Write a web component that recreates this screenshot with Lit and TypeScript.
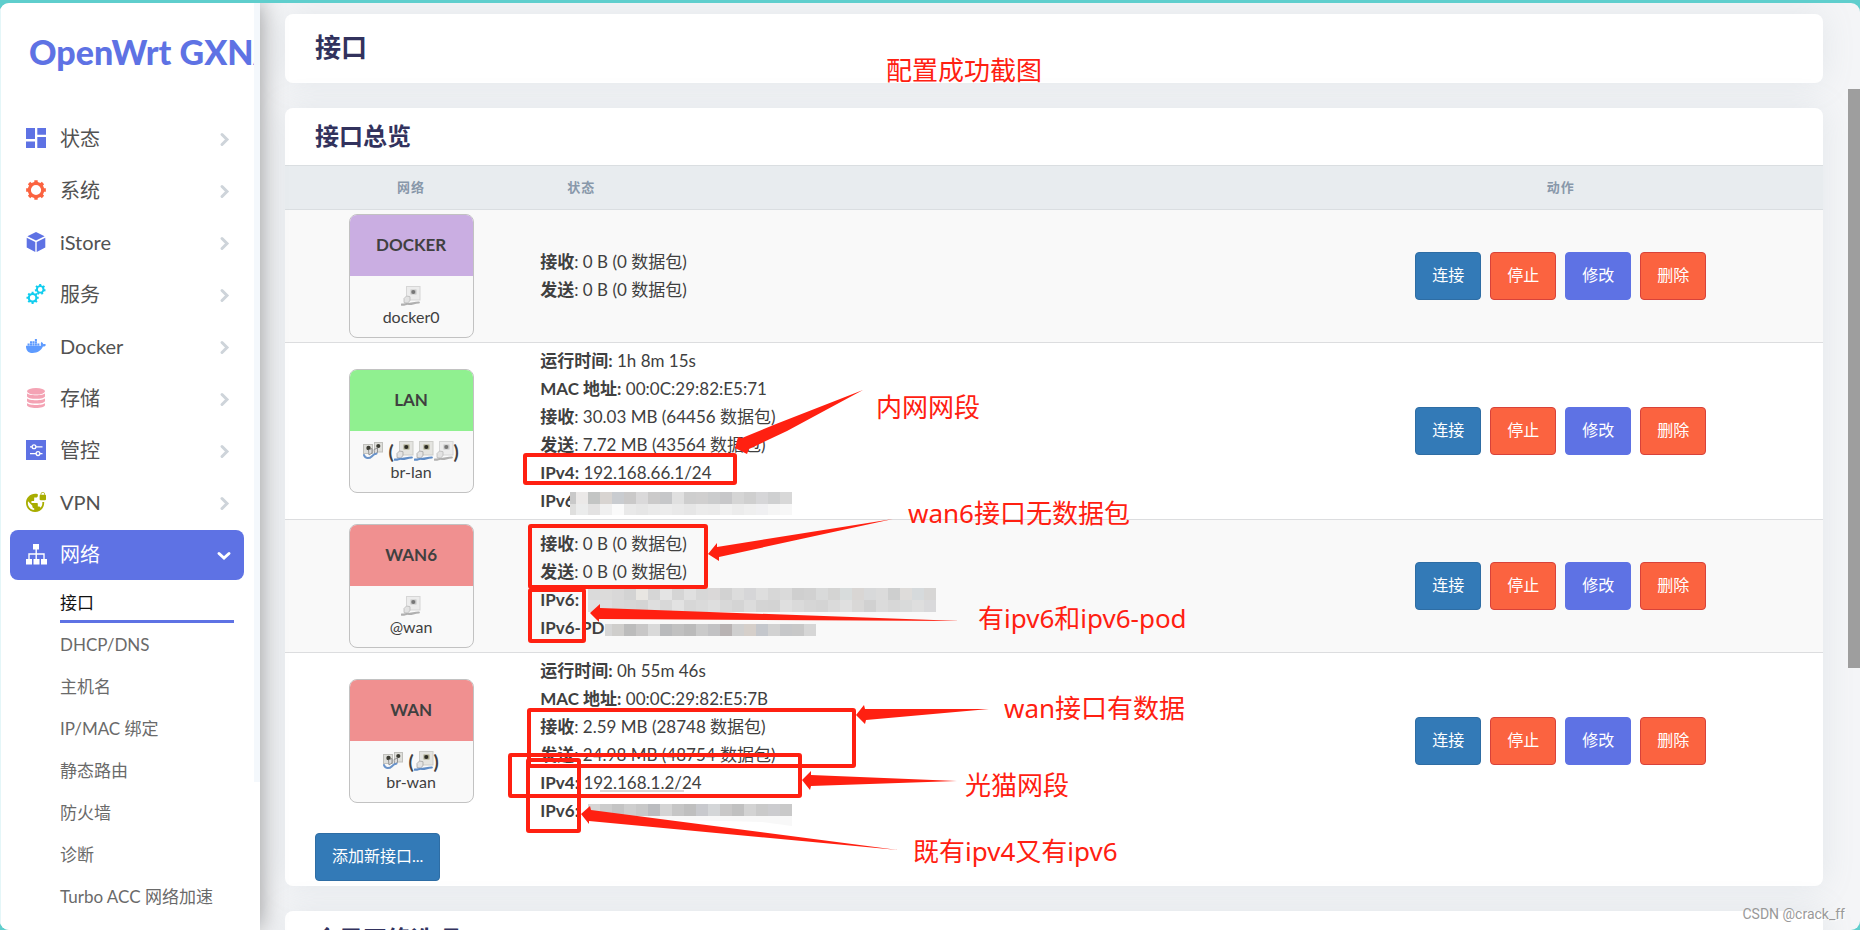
import { LitElement, html, css, svg, nothing } from "lit";
import { customElement, state } from "lit/decorators.js";
import { classMap } from "lit/directives/class-map.js";

/* Outline of a toothed wheel with a round hole, drawn with the even-odd rule. */
function gear(cx: number, cy: number, outer: number, inner: number, hole: number, teeth: number): string {
  const pts: string[] = [];
  const step = (Math.PI * 2) / teeth;
  const at = (r: number, a: number) => `${(cx + r * Math.sin(a)).toFixed(2)} ${(cy - r * Math.cos(a)).toFixed(2)}`;
  for (let i = 0; i < teeth; i++) {
    const a = i * step;
    pts.push(at(inner, a - step * 0.27), at(outer, a - step * 0.21), at(outer, a + step * 0.21), at(inner, a + step * 0.27));
  }
  return `M${pts.join("L")}ZM${cx - hole} ${cy}a${hole} ${hole} 0 1 0 ${hole * 2} 0a${hole} ${hole} 0 1 0 ${-hole * 2} 0Z`;
}

const icon = (viewBox: string, color: string, body: unknown) =>
  html`<svg class="nav-icon" viewBox=${viewBox} fill=${color} aria-hidden="true">${body}</svg>`;

const icons = {
  status: icon("0 0 20 20", "#5e72e4", svg`<path d="M0 0h9v11H0zM0 13.5h9V20H0zM11.3 0H20v6.7h-8.7zM11.3 9H20v11h-8.7z"/>`),
  system: icon("0 0 20 20", "#fb6340", svg`<path fill-rule="evenodd" d=${gear(10, 10, 10, 8.3, 5.1, 8)}/>`),
  store: icon("0 0 20 20", "#5e72e4", svg`<path d="M10 0l8.6 4.3L10 8.6 1.4 4.3zM.7 5.7L9.3 10v10L.7 15.6zM19.3 5.7L10.7 10v10l8.600-4.400z"/>`),
  services: icon("0 0 20 20", "#11cdef", svg`<path fill-rule="evenodd" d=${gear(14.2, 5.4, 5.5, 4.3, 2.3, 7)}/><path fill-rule="evenodd" d=${gear(6.6, 13.8, 6.2, 4.9, 2.7, 8)}/>`),
  docker: icon("0 0 640 512", "#5e9bff", svg`<path d="M349.9 236.3h-66.1v-59.4h66.1v59.4zm0-204.3h-66.1v60.7h66.1V32zm78.2 144.8H362v59.4h66.1v-59.4zm-156.3-72.1h-66.1v60.1h66.1v-60.1zm78.1 0h-66.1v60.1h66.1v-60.1zm276.8 100c-14.4-9.7-47.6-13.2-73.1-8.4-3.3-24-16.7-44.9-41.1-63.7l-14-9.3-9.3 14c-18.4 27.8-23.4 73.6-3.7 103.8-8.7 4.7-25.8 11.1-48.4 10.7H2.4c-8.7 50.8 5.8 116.8 44 162.1 37.1 43.9 92.7 66.2 165.4 66.2 157.4 0 273.9-72.5 328.4-204.2 21.4.4 67.6.1 91.3-45.2 1.5-2.5 6.6-13.2 8.5-17.1l-13.3-8.9zm-511.1-27.9h-66v59.4h66.1v-59.4zm78.1 0h-66.1v59.4h66.1v-59.4zm78.1 0h-66.1v59.4h66.1v-59.4zm-78.1-72.1h-66.1v60.1h66.1v-60.1z"/>`),
  storage: icon("0 0 20 20", "#f4a3b4", svg`<ellipse cx="10" cy="3.3" rx="9" ry="3.3"/><path d="M1 5.2c1.5 2.6 16.5 2.6 18 0v3c0 3.4-18 3.4-18 0zM1 10.200c1.5 2.6 16.5 2.6 18 0v2.700c0 3.400-18 3.400-18 0zM1 15c1.5 2.6 16.5 2.6 18 0v2c0 3.900-18 3.900-18 0z"/>`),
  control: icon("0 0 20 20", "#5e72e4", svg`<path d="M0 0h20v20H0z"/><g stroke="#fff" stroke-width="1.3" fill="#5e72e4"><path d="M4 6.8h12.5M4 13.6h12.5"/><circle cx="8" cy="6.8" r="1.9"/><circle cx="12" cy="13.6" r="1.9"/></g>`),
  vpn: icon("1 1 22 22", "#a8ad00", svg`<path d="M22 4v-.5C22 2.12 20.88 1 19.5 1S17 2.12 17 3.5V4c-.55 0-1 .45-1 1v4c0 .55.45 1 1 1h5c.55 0 1-.45 1-1V5c0-.55-.45-1-1-1zm-.8 0h-3.4v-.5c0-.94.76-1.7 1.7-1.7s1.7.76 1.7 1.7V4zm-2.28 8c.04.33.08.66.08 1 0 2.080-.8 3.970-2.1 5.390-.26-.81-1-1.390-1.900-1.390h-1v-3c0-.55-.45-1-1-1H7v-2h2c.55 0 1-.45 1-1V7h2c1.100 0 2-.9 2-2V3.460c-.95-.3-1.950-.46-3-.46C5.480 3 1 7.480 1 13s4.480 10 10 10 10-4.480 10-10c0-.34-.02-.67-.05-1h-2.030zM10 20.930c-3.950-.49-7-3.850-7-7.930 0-.62.08-1.210.21-1.790L8 16v1c0 1.100.9 2 2 2v1.930z"/>`),
  network: icon("0 0 20 20", "#fff", svg`<path d="M7 0h6v5.500H7zM0 15h6v5.500H0zM7.500 15h6v5.500h-6zM15 15h6v5.500h-6z"/><path d="M10.200 5v10M3 15v-5h15v5" fill="none" stroke="#fff" stroke-width="1.400"/>`),
};

const port = (up: boolean) => svg`
  <rect x="5.5" y=".5" width="13.5" height="13.5" fill=${up ? "#e4e4e0" : "#ececec"} stroke=${up ? "#cdcdc9" : "#d6d6d6"}/>
  <rect x="9.5" y="3.5" width="6" height="5" fill=${up ? "#a3a283" : "#c4c4c4"}/>
  <circle cx="12.300" cy="6" r="2" fill=${up ? "#2c2c26" : "#777"}/>
  <path d="M3 12.500l2.500-2.500 3.500.700v4l-2.500 2.300-3.500-.500z" fill="#e2e2e2" stroke=${up ? "#a3a3a3" : "#bababa"} stroke-width=".8"/>
  <path d="M.8 18.600c3 .600 4-1.300 7-.800s5-1.200 10-1.300" fill="none" stroke=${up ? "#5f8cc6" : "#b0b0b0"} stroke-width="2.200" stroke-linecap="round"/>`;

const bridge = svg`
  <rect x=".5" y="3.500" width="9" height="9" fill="#dededa" stroke="#c0c0bc"/>
  <rect x="11.500" y="1.500" width="8" height="9.500" fill="#dededa" stroke="#c0c0bc"/>
  <circle cx="5.500" cy="7" r="2.200" fill="#3c3c34"/><circle cx="15.300" cy="5" r="2.100" fill="#3c3c34"/>
  <path d="M5.500 9l3.500-1.500v4.500l-3 2zM11 8.500l3.500-1.500v4.500l-3 2z" fill="#ddd" stroke="#808080" stroke-width=".8"/>
  <path d="M1 14c1 3.500 5 4.200 8 1.200s3-1.500 4.500-2.700" fill="none" stroke="#6a93c9" stroke-width="2" stroke-linecap="round"/>`;

const thumb = (body: unknown, label: string) =>
  html`<svg class="thumb" viewBox="0 0 20 20" role="img" aria-label=${label}>${body}</svg>`;

interface NavItem { label: string; icon: unknown; }
interface Stat { key: string; value?: string; softColon?: boolean; }
interface Iface { name: string; device: string; tone: string; bridged: boolean; ports: boolean[]; stats: Stat[]; }

const NAV: NavItem[] = [
  { label: "状态", icon: icons.status },
  { label: "系统", icon: icons.system },
  { label: "iStore", icon: icons.store },
  { label: "服务", icon: icons.services },
  { label: "Docker", icon: icons.docker },
  { label: "存储", icon: icons.storage },
  { label: "管控", icon: icons.control },
  { label: "VPN", icon: icons.vpn },
  { label: "网络", icon: icons.network },
];

const SUBNAV = ["接口", "DHCP/DNS", "主机名", "IP/MAC 绑定", "静态路由", "防火墙", "诊断", "Turbo ACC 网络加速"];

const rx = (value: string): Stat => ({ key: "接收", value, softColon: true });
const tx = (value: string): Stat => ({ key: "发送", value, softColon: true });

const IFACES: Iface[] = [
  { name: "DOCKER", device: "docker0", tone: "docker", bridged: false, ports: [false],
    stats: [rx("0 B (0 数据包)"), tx("0 B (0 数据包)")] },
  { name: "LAN", device: "br-lan", tone: "lan", bridged: true, ports: [true, true, false],
    stats: [{ key: "运行时间", value: "1h 8m 15s" }, { key: "MAC 地址", value: "00:0C:29:82:E5:71" },
      rx("30.03 MB (64456 数据包)"), tx("7.72 MB (43564 数据包)"), { key: "IPv4", value: "192.168.66.1/24" }, { key: "IPv6" }] },
  { name: "WAN6", device: "@wan", tone: "wan", bridged: false, ports: [false],
    stats: [rx("0 B (0 数据包)"), tx("0 B (0 数据包)"), { key: "IPv6" }, { key: "IPv6-PD" }] },
  { name: "WAN", device: "br-wan", tone: "wan", bridged: true, ports: [true],
    stats: [{ key: "运行时间", value: "0h 55m 46s" }, { key: "MAC 地址", value: "00:0C:29:82:E5:7B" },
      rx("2.59 MB (28748 数据包)"), tx("24.98 MB (48754 数据包)"), { key: "IPv4", value: "192.168.1.2/24" }, { key: "IPv6" }] },
];

/* Hand-drawn notes laid over the page. */
const NOTES = [
  { text: "配置成功截图", x: 886, y: 53 },
  { text: "内网网段", x: 876, y: 390 },
  { text: "wan6接口无数据包", x: 908, y: 496 },
  { text: "有ipv6和ipv6-pod", x: 978, y: 601 },
  { text: "wan接口有数据", x: 1004, y: 691 },
  { text: "光猫网段", x: 965, y: 768 },
  { text: "既有ipv4又有ipv6", x: 913, y: 834 },
];

const FRAMES = [
  [523, 453, 737, 485], [528, 524, 708, 589], [528, 588, 586, 643],
  [527, 708, 856, 768], [508, 753, 802, 798], [526, 758, 581, 833],
];

const ARROWS = [
  "735,448 738,437 742,438 776,424 863,390 787,431 749,449 747,454",
  "708,554 717,543 717,547 893,519 719,557 719,561",
  "590,613 600,604 600,608 961,621 599,619 599,622",
  "856,715 864,705 865,709 989,709 866,720 865,724",
  "802,780 811,771 811,775 957,781 811,786 810,790",
  "581,814 590,806 591,810 898,850 589,821 589,824",
];

/* Pixelated strips that hide the addresses: x, y, first cell's width, cell height, cell colours. */
const MOSAICS: [number, number, number, number, string][] = [
  [570, 492, 6, 12, "c9c9c9 ebe9e8 c3c5c4 d8d4d1 c9ccd0 cac9c9 dad9da cbcaca c6c7c9 e0e0e0 cecece d0cfcf cbcccd c7c7c9 d5d5d5 cfcfcf d6d6d8 cfd0d1 d8d8d8"],
  [570, 504, 6, 11, "dfdfde ebecec e3e2e2 f0f0f0 fafafa e9e9e9 e6e6e6 eaeaea ececec e9e9e9 e6e6e6 ebebeb eaeaea f0f0f0 ececec efefef f0f0f2 f5f5f5 f7f7f7"],
  [588, 588, 12, 12, "dadada dcdbda d9d8d8 d3d3d3 e8e6e2 d6d6d6 e4e4e4 d5d5d5 e0e0e0 d7d7d7 dad8d8 d2d2d2 dcdcdc d6d6d8 dedede d7d7d7 dadada cfcfcf d1d1d1 d9dada d4d4d3 d8dcdc d9d6d4 d8d9da dbdbdb cecfcf dedcda d6dadc d7d6d5"],
  [588, 600, 12, 12, "e0e0e0 dddddf d8d8d8 d6d6d6 d4d4d4 dedede d8d8d8 e2e2e2 d7d7d7 dadada dedede d8d8d8 d4d4d4 dcdcdc d4d4d4 d3d3d3 dfdfdf dadada d6d6d6 d4d4d4 dadada e0e0e0 d9d8d7 d1d1d1 dbdbdb d7d7d7 d9dada dedede d9d9db"],
  [605, 624, 7, 12, "d6d6d6 cfcecc bcbcbc c8c7c7 d9d9d9 b9babc c1c1c1 bbbbbb cacaca c2c2c4 b8b3b3 cfcfcf d5cfca c4c7cc d2d2d2 c6c7c9 c8c8c8 d6d6d6"],
  [588, 804, 12, 12, "d5d5d5 cccccc c4c4c4 cecece c8c8c8 bbbcbf d4d4d4 c6c6c6 bfbfbf c8c9cd d4d6d8 c9c8c8 c1c1c1 d3d3d3 cacaca cccccf c9c9c9"],
];

@customElement("app-root")
export class AppRoot extends LitElement {
  @state() private current = "接口";

  static styles = css`
    :host {
      display: block;
      height: 100vh;
      overflow: hidden;
      position: relative;
      box-sizing: border-box;
      padding-top: 3px;
      background: #5fcecd;
      color: #404040;
      font: 17px/28px Lato, "Noto Sans CJK SC", sans-serif;
    }
    * { box-sizing: border-box; }
    h1, h2, ul { margin: 0; padding: 0; }
    ul { list-style: none; }
    a { color: inherit; text-decoration: none; }
    .frame {
      display: flex;
      height: 100%;
      border-radius: 9px;
      overflow: hidden;
      background: #f4f5f7;
      position: relative;
    }
    .sidebar {
      flex: none;
      width: 260px;
      display: flex;
      background: #fff;
      border-left: 1px solid #e4f6f8;
      box-shadow: 0 0 24px rgba(0, 0, 0, 0.4);
      z-index: 1;
    }
    .side-content { flex: 1; min-width: 0; overflow: hidden; }
    .side-track { width: 6px; height: 84%; background: #f4f8fc; }
    .brand {
      display: block;
      height: 111px;
      padding: 24px 0 0 28px;
      color: #5e72e4;
      font-size: 34px;
      font-weight: 900;
      line-height: 50px;
      white-space: nowrap;
    }
    .menu { display: flex; flex-direction: column; gap: 2px; padding: 0 10px 0 9px; }
    .menu-link {
      display: flex;
      align-items: center;
      height: 50px;
      padding: 0 13px 2px 16px;
      border-radius: 8px;
      color: #525252;
      font-size: 20px;
    }
    .nav-icon { width: 20px; height: 20px; margin-right: 14px; overflow: visible; }
    .menu-text { flex: 1; }
    .chevron { width: 14px; height: 14px; margin-top: 2px; fill: none; stroke: #ced4da; stroke-width: 3; stroke-linecap: round; overflow: visible; }
    .menu-link.active { background: #5e72e4; color: #fff; }
    .menu-link.active .chevron { stroke: #fff; }
    .submenu { padding: 0 10px 0 50px; margin-top: -1px; }
    .sub-link {
      display: block;
      height: 42px;
      padding-top: 1px;
      line-height: 42px;
      color: #6a6a6a;
      white-space: nowrap;
    }
    .sub-link.active { border-bottom: 3px solid #5e72e4; color: #111; }
    main {
      flex: 1;
      min-width: 0;
      display: flex;
      flex-direction: column;
      gap: 25px;
      padding: 11px 37px 0 25px;
    }
    .card {
      flex: none;
      background: #fff;
      border-radius: 8px;
      box-shadow: 0 0 32px rgba(136, 152, 170, 0.15);
    }
    .page-title { padding: 0 30px 2px; font-size: 26px; line-height: 67px; color: #32325d; }
    .card-title { padding: 0 30px 2px; font-size: 24px; line-height: 55px; color: #32325d; }
    table { width: 100%; table-layout: fixed; border-collapse: separate; border-spacing: 0; }
    .col-net { width: 16.4%; }
    .col-act { width: 34.1%; }
    th {
      height: 45px;
      padding: 0 0 2px;
      background: #e8ecef;
      border-top: 1px solid #dadee1;
      border-bottom: 1px solid #dadee1;
      color: #8898aa;
      font-size: 13px;
      letter-spacing: 1px;
    }
    .th-status { text-align: left; padding-left: 30px; }
    td { padding: 4px 0; border-bottom: 1px solid #dcdddf; vertical-align: middle; }
    tr:nth-child(odd) td { background: #f9f9f9; }
    tr:last-child td { border-bottom: 0; }
    .td-status { padding-left: 3px; }
    .ifacebox {
      width: 125px;
      margin: 0 auto;
      border: 1px solid #c2c2c2;
      border-radius: 8px;
      overflow: hidden;
      background: #f9f9f9;
      text-align: center;
    }
    .iface-head { padding-bottom: 2px; line-height: 59px; font-weight: 700; }
    .docker { background: #caaee2; }
    .lan { background: #90f090; }
    .wan { background: #f09090; }
    .iface-body { padding: 10px 0; font-size: 16px; line-height: 21px; }
    .thumbs { display: flex; justify-content: center; align-items: center; height: 20px; font-size: 19px; font-weight: 700; }
    .thumb { width: 20px; height: 20px; }
    .group { display: flex; align-items: center; margin-left: 5px; }
    .actions { display: flex; justify-content: center; gap: 9px; }
    button {
      height: 48px;
      padding: 0 16px 2px;
      border: 1px solid #2e6da4;
      border-radius: 4px;
      background: #337ab7;
      color: #fff;
      font: 16px/24px Lato, "Noto Sans CJK SC", sans-serif;
      cursor: pointer;
    }
    .danger { background: #fb6340; border-color: #d8423a; }
    .edit { background: #5e72e4; border-color: #5e72e4; }
    .card-foot { padding: 4px 30px 5px; display: flex; }
    .page-scroll {
      position: absolute;
      top: 86px;
      right: 0;
      width: 12px;
      height: 579px;
      background: #9e9e9e;
    }
    .overlay { position: absolute; inset: 0; z-index: 2; pointer-events: none; }
    .ink { position: absolute; left: 0; top: 0; width: 1860px; height: 930px; }
    .note {
      position: absolute;
      color: #ff2011;
      font: 26px/34px "Noto Sans", "Noto Sans CJK SC", sans-serif;
      white-space: nowrap;
    }
    .watermark {
      position: absolute;
      right: 15px;
      bottom: 4px;
      color: #999;
      font: 14px/24px Roboto, sans-serif;
      text-shadow: 1px 1px 0 #fff;
    }
  `;

  private renderNav(item: NavItem, active: boolean) {
    return html`<li>
      <a class=${classMap({ "menu-link": true, active })} href="#">
        ${item.icon}<span class="menu-text">${item.label}</span>
        <svg class="chevron" viewBox="0 0 14 14" aria-hidden="true">
          <path d=${active ? "M2 5.5L7 10l5-4.500" : "M5 2.500L10 7.500l-5 5"}></path>
        </svg>
      </a>
    </li>`;
  }

  private renderIface(i: Iface) {
    const ports = i.ports.map((up) => thumb(port(up), up ? "已连接" : "未连接"));
    return html`<tr>
      <td>
        <div class="ifacebox">
          <div class="iface-head ${i.tone}">${i.name}</div>
          <div class="iface-body">
            <div class="thumbs">
              ${i.bridged ? html`${thumb(bridge, "桥接")}<span class="group">(${ports})</span>` : ports}
            </div>
            ${i.device}
          </div>
        </div>
      </td>
      <td class="td-status">
        ${i.stats.map((s) => html`<div>
          ${s.softColon ? html`<strong>${s.key}</strong>:` : html`<strong>${s.key}:</strong>`}
          ${s.value ?? nothing}
        </div>`)}
      </td>
      <td>
        <div class="actions">
          <button type="button">连接</button>
          <button type="button" class="danger">停止</button>
          <button type="button" class="edit">修改</button>
          <button type="button" class="danger">删除</button>
        </div>
      </td>
    </tr>`;
  }

  private renderInk() {
    return html`<svg class="ink" viewBox="0 0 1860 930" aria-hidden="true">
      ${MOSAICS.map(([x, y, first, h, cells]) => cells.split(" ").map((c, n) =>
        svg`<rect x=${n === 0 ? x : x + first + (n - 1) * 12} y=${y} width=${n === 0 ? first : 12} height=${h}
          fill=${"#" + c} shape-rendering="crispEdges"/>`))}
      <path d="M600 790h84v2h-84z" fill="#d8d8d8"></path>
      <path d="M600 816h192v10l-30-4-162-4z" fill="#f8f8f8"></path>
      ${FRAMES.map(([l, t, r, b]) =>
        svg`<rect x=${l + 2} y=${t + 2} width=${r - l - 4} height=${b - t - 4} rx="1" fill="none" stroke="#ff2011" stroke-width="4"/>`)}
      ${ARROWS.map((p) => svg`<polygon points=${p} fill="#ff2011"/>`)}
    </svg>`;
  }

  render() {
    return html`
      <div class="frame">
        <aside class="sidebar">
          <nav class="side-content">
            <a class="brand" href="#">OpenWrt GXNAS</a>
            <ul class="menu">
              ${NAV.map((item, n) => this.renderNav(item, n === NAV.length - 1))}
              <li>
                <ul class="submenu">
                  ${SUBNAV.map((label) => html`<li>
                    <a class=${classMap({ "sub-link": true, active: label === this.current })} href="#"
                      @click=${() => (this.current = label)}>${label}</a>
                  </li>`)}
                </ul>
              </li>
            </ul>
          </nav>
          <div class="side-track"></div>
        </aside>
        <main>
          <header class="card"><h1 class="page-title">接口</h1></header>
          <section class="card">
            <h2 class="card-title">接口总览</h2>
            <table>
              <colgroup><col class="col-net" /><col /><col class="col-act" /></colgroup>
              <thead>
                <tr><th>网络</th><th class="th-status">状态</th><th>动作</th></tr>
              </thead>
              <tbody>${IFACES.map((i) => this.renderIface(i))}</tbody>
            </table>
            <div class="card-foot"><button type="button">添加新接口...</button></div>
          </section>
          <section class="card"><h2 class="card-title">全局网络选项</h2></section>
        </main>
        <div class="page-scroll"></div>
      </div>
      <div class="overlay">
        ${this.renderInk()}
        ${NOTES.map((n) => html`<span class="note" style="left:${n.x}px;top:${n.y}px">${n.text}</span>`)}
        <span class="watermark">CSDN @crack_ff</span>
      </div>
    `;
  }
}
